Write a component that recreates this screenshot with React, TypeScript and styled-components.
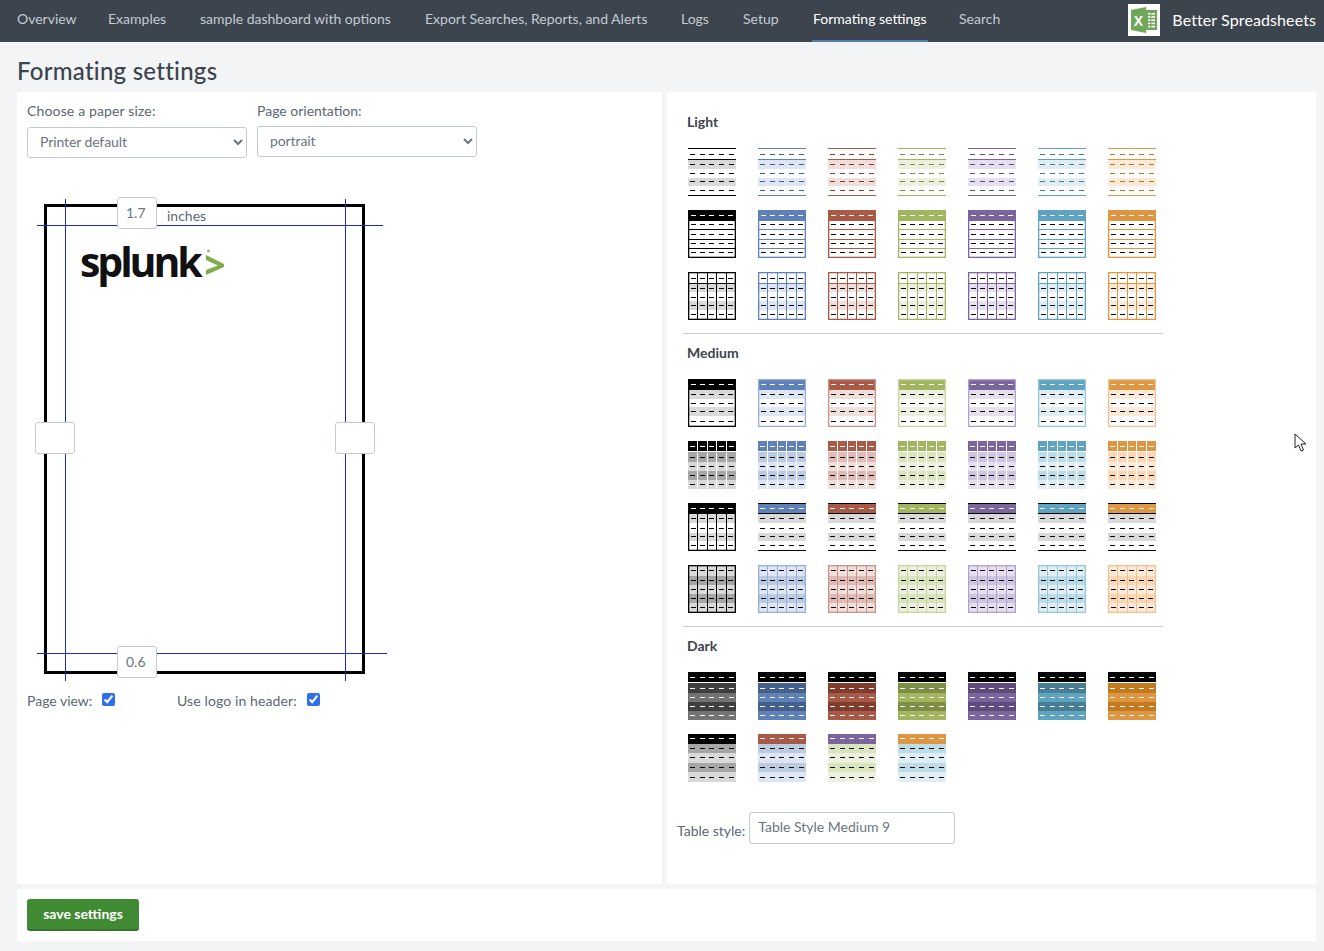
import React from "react";
import styled, { createGlobalStyle } from "styled-components";

const Global = createGlobalStyle`
  html, body { margin: 0; padding: 0; background: #f2f4f5; }
  body { font-family: Lato, "Open Sans", sans-serif; color: #5c6773; }
  * { box-sizing: border-box; }
`;

const Page = styled.div`
  width: 1324px;
  height: 951px;
  position: relative;
  overflow: hidden;
`;

const Header = styled.header`
  height: 42px;
  background: #3c444d;
  display: flex;
  align-items: stretch;
  justify-content: space-between;
  padding: 0 8px 0 17px;
`;
const Nav = styled.nav`
  display: flex;
`;
const NavItem = styled.a<{ $w: number }>`
  display: block;
  width: ${(p) => p.$w}px;
  white-space: nowrap;
`;
const NavLabel = styled.span<{ $active?: boolean }>`
  display: inline-block;
  font-size: 14px;
  line-height: 38px;
  height: 42px;
  color: ${(p) => (p.$active ? "#ffffff" : "#c3cbd4")};
  border-bottom: 2px solid ${(p) => (p.$active ? "#5b7ea6" : "transparent")};
  ${(p) => (p.$active ? "margin-left: -1px; padding: 0 1px;" : "")}
`;
const Brand = styled.div`
  display: flex;
  align-items: center;
  gap: 12px;
  padding-bottom: 2px;
  color: #fff;
  font-size: 16px;
  letter-spacing: 0.1px;
`;
const BrandName = styled.span`
  padding-bottom: 2px;
`;
const Title = styled.h1`
  margin: 0 0 0 17px;
  height: 50px;
  line-height: 57px;
  font-size: 24px;
  font-weight: 500;
  letter-spacing: 0.25px;
  color: #3c444d;
`;
const Panels = styled.div`
  display: flex;
  gap: 5px;
  margin: 0 8px 0 17px;
  height: 792px;
`;
const LeftPanel = styled.section`
  width: 645px;
  background: #fff;
  padding: 11px 10px 0;
`;
const RightPanel = styled.section`
  flex: 1;
  background: #fff;
  padding: 22px 10px 0;
`;
const FormRow = styled.div`
  display: flex;
  align-items: flex-start;
  gap: 10px;
`;
const Field = styled.div`
  display: flex;
  flex-direction: column;
  width: 220px;
`;
const FieldLabel = styled.label<{ $spread?: boolean }>`
  font-size: 14px;
  line-height: 15px;
  margin-bottom: 8px;
  letter-spacing: ${(p) => (p.$spread ? "0.15px" : "0")};
`;
const Select = styled.select<{ $drop?: boolean }>`
  height: 31px;
  width: 220px;
  margin-top: ${(p) => (p.$drop ? "1px" : "0")};
  background-color: #fff;
  border: 1px solid #c3cbd4;
  border-radius: 3px;
  padding: 0 8px 2px;
  font-family: inherit;
  font-size: 14px;
  letter-spacing: -0.1px;
  color: #6b7580;
`;
const Canvas = styled.div`
  position: relative;
  height: 491px;
  margin-top: 32px;
`;
const Sheet = styled.div`
  position: absolute;
  left: 17px;
  top: 14px;
  width: 321px;
  height: 470px;
  border: 3px solid #000;
`;
const VGuide = styled.div<{ $x: number }>`
  position: absolute;
  left: ${(p) => p.$x}px;
  top: 9px;
  width: 1px;
  height: 482px;
  background: #1c2bc8;
`;
const HGuide = styled.div<{ $y: number; $w: number }>`
  position: absolute;
  left: 10px;
  top: ${(p) => p.$y}px;
  width: ${(p) => p.$w}px;
  height: 1px;
  background: #1c2bc8;
`;
const MarginInput = styled.input<{ $x: number; $y: number }>`
  position: absolute;
  left: ${(p) => p.$x}px;
  top: ${(p) => p.$y}px;
  width: 40px;
  height: 32px;
  background: #fff;
  border: 1px solid #c3cbd4;
  border-radius: 3px;
  padding: 0 8px 2px;
  font-family: inherit;
  font-size: 14px;
  color: #6b7580;
  outline: none;
`;
const Inches = styled.span`
  position: absolute;
  left: 140px;
  top: 17px;
  font-size: 14px;
  line-height: 17px;
`;
const Logo = styled.div`
  position: absolute;
  left: 53px;
  top: 45px;
  display: flex;
  align-items: flex-start;
  gap: 6px;
`;
const LogoWord = styled.span`
  font-family: "Open Sans", sans-serif;
  font-weight: 700;
  font-size: 41px;
  line-height: 52px;
  letter-spacing: -3.1px;
  color: #111;
`;
const LogoMark = styled.svg`
  display: block;
  margin-top: 12px;
`;
const CheckRow = styled.div`
  display: flex;
  margin-top: 12px;
`;
const CheckGroup = styled.div`
  display: flex;
  align-items: flex-start;
  width: 150px;
  gap: 10px;
`;
const CheckLabel = styled.label<{ $spread?: boolean }>`
  font-size: 14px;
  line-height: 15px;
  letter-spacing: ${(p) => (p.$spread ? "0.12px" : "0")};
`;
const Check = styled.input`
  margin: 0;
  width: 13px;
  height: 13px;
  accent-color: #2f6fe8;
`;
const Section = styled.div`
  margin-left: 6px;
  width: 480px;
`;
const Divider = styled.hr`
  border: 0;
  border-top: 1px solid #c9cccf;
  margin: 13px 0 11px;
`;
const Heading = styled.h3`
  margin: 0 0 19px 4px;
  font-size: 14px;
  line-height: 15px;
  font-weight: 700;
  color: #3c444d;
`;
const ThumbGrid = styled.div`
  display: grid;
  grid-template-columns: repeat(7, 48px);
  gap: 14px 22px;
  padding-left: 5px;
`;
const ThumbSvg = styled.svg`
  display: block;
  shape-rendering: crispEdges;
`;
const StyleRow = styled.div`
  display: flex;
  align-items: flex-start;
  gap: 4px;
  margin-top: 30px;
`;
const StyleLabel = styled.label`
  font-size: 14px;
  line-height: 17px;
  margin-top: 10px;
`;
const StyleInput = styled.input`
  width: 206px;
  height: 32px;
  border: 1px solid #c3cbd4;
  border-radius: 3px;
  padding: 0 8px 4px;
  font-family: inherit;
  font-size: 14px;
  color: #6b7580;
  outline: none;
`;
const BottomPanel = styled.section`
  margin: 5px 8px 0 17px;
  height: 52px;
  background: #fff;
  padding: 10px;
`;
const SaveButton = styled.button`
  width: 112px;
  height: 32px;
  background: #3f8a33;
  border: 0;
  border-bottom: 2px solid #35742b;
  border-radius: 3px;
  color: #fff;
  font-family: inherit;
  font-size: 14px;
  font-weight: 700;
  padding: 0 0 1px;
`;
const Pointer = styled.svg`
  position: absolute;
  left: 1294px;
  top: 433px;
`;

type Pal = { main: string; dark: string; tint: string; mid: string; edge: string; dash: string };
const PALS: Pal[] = [
  { main: "#000000", dark: "#404040", tint: "#d9d9d9", mid: "#a6a6a6", edge: "#000000", dash: "#000000" },
  { main: "#5f81b9", dark: "#45608f", tint: "#dfe6f3", mid: "#bacbe2", edge: "#95b0d9", dash: "#3f5f97" },
  { main: "#a85a47", dark: "#803d2e", tint: "#efdeda", mid: "#e0bbb6", edge: "#c9938b", dash: "#803d2e" },
  { main: "#a2b55f", dark: "#7d8f47", tint: "#edf0df", mid: "#dbe5bd", edge: "#c8d59b", dash: "#7d8f47" },
  { main: "#7c659f", dark: "#5f4b7d", tint: "#e6e0ee", mid: "#cfc5e0", edge: "#b3a2cc", dash: "#5f4b7d" },
  { main: "#5ea3bf", dark: "#477e94", tint: "#e0eef3", mid: "#bcdce8", edge: "#93c9dd", dash: "#447f97" },
  { main: "#de9643", dark: "#c47a1e", tint: "#fcead9", mid: "#fbd8b5", edge: "#f3c08f", dash: "#b8731f" },
];

const COLS = [9, 19, 28, 38];
const DASH_Y = [6, 16, 25, 33, 42];
const DASH_X = [2, 12, 21, 31, 41];

const R = (x: number, y: number, w: number, h: number, c: string, k: string) => (
  <rect key={k} x={x} y={y} width={w} height={h} fill={c} />
);
const Dashes = (colors: string[], xs = DASH_X, ys = DASH_Y) =>
  ys.flatMap((y, r) => xs.map((x, i) => R(x, y, 5, 1, colors[r], `d${r}${i}`)));
const Outline = (c: string) => (
  <rect key="o" x="0.65" y="0.65" width="46.7" height="46.7" fill="none" stroke={c} strokeWidth="1.3" shapeRendering="geometricPrecision" />
);
const Hline = (y: number, c: string) => R(0, y, 48, 1, c, `h${y}`);
const Vlines = (c: string) => COLS.map((x) => R(x, 0, 1, 48, c, `v${x}`));

const K = "#000000";
const W = "#ffffff";

type Kind =
  | "plain" | "boxed" | "gridded"
  | "medHead" | "medCols" | "medRule" | "medTint"
  | "darkBands" | "darkHead";

function drawThumb(kind: Kind, i: number, alt?: Pal) {
  const p = PALS[i];
  switch (kind) {
    case "plain":
      return [
        R(0, 11, 48, 10, p.tint, "a"), R(0, 30, 48, 8, p.tint, "b"),
        Hline(0, p.main), Hline(11, p.main), Hline(47, p.main),
        ...Dashes(Array(5).fill(p.dash)),
      ];
    case "boxed":
      return [
        R(0, 0, 48, 10, p.main, "a"),
        Hline(10, p.main), Hline(19, p.main), Hline(29, p.main), Hline(38, p.main),
        Outline(p.main),
        ...Dashes([W, K, K, K, K], [3, 12, 21, 31, 40], [5, 14, 24, 33, 42]),
      ];
    case "gridded":
      return [
        R(0, 11, 48, 9, p.tint, "a"), R(0, 29, 48, 9, p.tint, "b"),
        Hline(11, p.main), ...Vlines(p.main), Outline(p.main),
        ...Dashes(Array(5).fill(K), [3, 12, 21, 31, 40]),
      ];
    case "medHead":
      return [
        R(0, 0, 48, 11, p.main, "a"), R(0, 11, 48, 9, p.tint, "b"), R(0, 28, 48, 9, p.tint, "c"),
        Outline(p.edge),
        ...Dashes([W, K, K, K, K], [3, 12, 21, 31, 40], [5, 15, 24, 32, 42]),
      ];
    case "medCols":
      return [
        R(0, 0, 48, 10, p.main, "a"), R(0, 11, 48, 10, p.mid, "b"), R(0, 21, 48, 9, p.tint, "c"),
        R(0, 30, 48, 9, p.mid, "d"), R(0, 39, 48, 9, p.tint, "e"),
        ...Vlines(W),
        ...Dashes([W, K, K, K, K], [2, 12, 21, 31, 41], [5, 16, 25, 34, 43]),
      ];
    case "medRule":
      if (i === 0) {
        return [
          R(0, 0, 48, 11, K, "a"), R(0, 11, 48, 9, p.tint, "b"), R(0, 30, 48, 8, p.tint, "c"),
          ...Vlines(K), Outline(K),
          ...Dashes([W, K, K, K, K], [3, 12, 21, 31, 40], [5, 15, 25, 33, 42]),
        ];
      }
      return [
        R(0, 0, 48, 11, p.main, "a"), R(0, 11, 48, 9, "#d9d9d9", "b"), R(0, 30, 48, 8, "#d9d9d9", "c"),
        Hline(0, K), Hline(10, K), Hline(47, K),
        ...Dashes([W, K, K, K, K], DASH_X, [5, 15, 25, 33, 42]),
      ];
    case "medTint":
      return [
        R(0, 0, 48, 48, p.tint, "a"), R(0, 11, 48, 9, p.mid, "b"), R(0, 29, 48, 9, p.mid, "c"),
        ...Vlines(p.edge), Outline(p.edge),
        ...Dashes(Array(5).fill(K), [3, 12, 21, 31, 40], [5, 15, 24, 33, 42]),
      ];
    case "darkBands": {
      const light = i === 0 ? "#737373" : p.main;
      const deep = i === 0 ? "#404040" : p.dark;
      return [
        R(0, 0, 48, 10, K, "a"), R(0, 11, 48, 10, deep, "b"), R(0, 21, 48, 9, light, "c"),
        R(0, 30, 48, 9, deep, "d"), R(0, 39, 48, 9, light, "e"),
        ...Dashes(Array(5).fill(W), DASH_X, [5, 16, 25, 34, 43]),
      ];
    }
    case "darkHead": {
      const body = alt ?? p;
      return [
        R(0, 0, 48, 10, p.main, "a"), R(0, 10, 48, 9, body.mid, "b"), R(0, 19, 48, 10, body.tint, "c"),
        R(0, 29, 48, 9, body.mid, "d"), R(0, 38, 48, 10, body.tint, "e"),
        ...Dashes([W, K, K, K, K], DASH_X, [4, 14, 23, 33, 43]),
      ];
    }
  }
}

const Thumb = ({ kind, i, alt }: { kind: Kind; i: number; alt?: Pal }) => (
  <ThumbSvg width="48" height="48" viewBox="0 0 48 48">
    {drawThumb(kind, i, alt)}
  </ThumbSvg>
);

const Row = ({ kind }: { kind: Kind }) => (
  <>
    {PALS.map((_, i) => (
      <Thumb key={i} kind={kind} i={i} />
    ))}
  </>
);

const ExcelLogo = () => (
  <svg width="32" height="32" viewBox="0 0 32 32" style={{ display: "block" }}>
    <rect width="32" height="32" fill="#fff" />
    <rect x="17" y="6" width="12" height="20" fill="#6fa85a" />
    <polygon points="3,6 18,3 18,29 3,26" fill="#6fa85a" />
    <g fill="#fff">
      <rect x="20" y="9" width="2.4" height="1.6" /><rect x="23.4" y="9" width="3.6" height="1.6" />
      <rect x="20" y="12.2" width="2.4" height="1.6" /><rect x="23.4" y="12.2" width="3.6" height="1.6" />
      <rect x="20" y="15.4" width="2.4" height="1.6" /><rect x="23.4" y="15.4" width="3.6" height="1.6" />
      <rect x="20" y="18.6" width="2.4" height="1.6" /><rect x="23.4" y="18.6" width="3.6" height="1.6" />
      <rect x="20" y="21.8" width="2.4" height="1.6" /><rect x="23.4" y="21.8" width="3.6" height="1.6" />
    </g>
    <text x="10.5" y="21.5" textAnchor="middle" fontFamily="'Liberation Sans', sans-serif" fontWeight="700" fontSize="14" fill="#fff">X</text>
  </svg>
);

const NAV: [string, number][] = [
  ["Overview", 91],
  ["Examples", 92],
  ["sample dashboard with options", 225],
  ["Export Searches, Reports, and Alerts", 256],
  ["Logs", 62],
  ["Setup", 70],
  ["Formating settings", 146],
  ["Search", 50],
];

export default function App() {
  return (
    <Page>
      <Global />
      <Header>
        <Nav>
          {NAV.map(([n, w]) => (
            <NavItem key={n} $w={w}>
              <NavLabel $active={n === "Formating settings"}>{n}</NavLabel>
            </NavItem>
          ))}
        </Nav>
        <Brand>
          <ExcelLogo />
          <BrandName>Better Spreadsheets</BrandName>
        </Brand>
      </Header>
      <Title>Formating settings</Title>
      <Panels>
        <LeftPanel>
          <FormRow>
            <Field>
              <FieldLabel $spread>Choose a paper size:</FieldLabel>
              <Select $drop defaultValue="Printer default">
                <option>Printer default</option>
              </Select>
            </Field>
            <Field>
              <FieldLabel>Page orientation:</FieldLabel>
              <Select defaultValue="portrait">
                <option>portrait</option>
              </Select>
            </Field>
          </FormRow>
          <Canvas>
            <Sheet />
            <VGuide $x={38} />
            <VGuide $x={318} />
            <HGuide $y={35} $w={346} />
            <HGuide $y={463} $w={350} />
            <Logo>
              <LogoWord>splunk</LogoWord>
              <LogoMark width="20" height="34" viewBox="0 0 20 34">
                <circle cx="2.5" cy="4" r="1.5" fill="#9dbb7e" />
                <polygon points="0,8 18,17 18,20 0,28 0,23 12,18.5 0,13" fill="#7fad4b" />
              </LogoMark>
            </Logo>
            <Inches>inches</Inches>
            <MarginInput $x={90} $y={7} defaultValue="1.7" />
            <MarginInput $x={8} $y={232} />
            <MarginInput $x={308} $y={232} />
            <MarginInput $x={90} $y={456} defaultValue="0.6" />
          </Canvas>
          <CheckRow>
            <CheckGroup>
              <CheckLabel>Page view:</CheckLabel>
              <Check type="checkbox" defaultChecked />
            </CheckGroup>
            <CheckGroup>
              <CheckLabel $spread>Use logo in header:</CheckLabel>
              <Check type="checkbox" defaultChecked />
            </CheckGroup>
          </CheckRow>
        </LeftPanel>
        <RightPanel>
          <Section>
            <Heading>Light</Heading>
            <ThumbGrid>
              <Row kind="plain" />
              <Row kind="boxed" />
              <Row kind="gridded" />
            </ThumbGrid>
            <Divider />
            <Heading>Medium</Heading>
            <ThumbGrid>
              <Row kind="medHead" />
              <Row kind="medCols" />
              <Row kind="medRule" />
              <Row kind="medTint" />
            </ThumbGrid>
            <Divider />
            <Heading>Dark</Heading>
            <ThumbGrid>
              <Row kind="darkBands" />
              <Thumb kind="darkHead" i={0} />
              <Thumb kind="darkHead" i={2} alt={PALS[1]} />
              <Thumb kind="darkHead" i={4} alt={PALS[3]} />
              <Thumb kind="darkHead" i={6} alt={PALS[5]} />
            </ThumbGrid>
          </Section>
          <StyleRow>
            <StyleLabel>Table style:</StyleLabel>
            <StyleInput defaultValue="Table Style Medium 9" />
          </StyleRow>
        </RightPanel>
      </Panels>
      <BottomPanel>
        <SaveButton>save settings</SaveButton>
      </BottomPanel>
      <Pointer width="14" height="20" viewBox="0 0 14 20">
        <path d="M1 1 L1 15 L4.5 12 L7 18 L9.5 17 L7 11 L12 11 Z" fill="#fff" stroke="#222" strokeWidth="1" />
      </Pointer>
    </Page>
  );
}
